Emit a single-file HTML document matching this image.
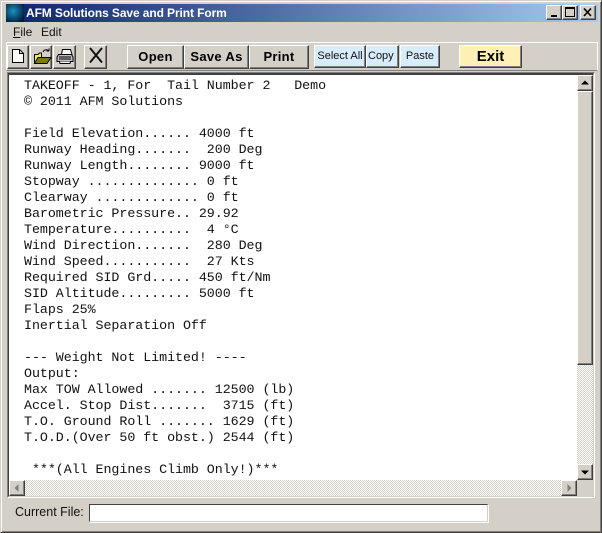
<!DOCTYPE html>
<html><head><meta charset="utf-8">
<style>
html,body{margin:0;padding:0;}
body{width:602px;height:533px;overflow:hidden;background:#d4d0c8;position:relative;font-family:"Liberation Sans",sans-serif;}
.a{position:absolute;box-sizing:border-box;}
.btn{position:absolute;box-sizing:border-box;background:#d4d0c8;border:1px solid;border-color:#fff #404040 #404040 #fff;box-shadow:inset -1px -1px 0 #808080;text-align:center;color:#000;white-space:nowrap;}
.tb{top:45px;height:24px;}
.big{top:45px;height:24px;font-weight:bold;font-size:13px;line-height:21px;letter-spacing:.3px;}
.blue{top:45px;height:23px;background:#d8edfc;font-size:11px;line-height:21px;color:#111;}
pre{position:absolute;margin:0;left:24px;top:79px;font:13.33px/16px "Liberation Mono",monospace;letter-spacing:-.05px;color:#111;}
.chk{background-color:#eee;background-image:conic-gradient(#d4d0c8 25%,#fff 0 50%,#d4d0c8 0 75%,#fff 0);background-size:2px 2px;}
</style></head><body>
<div class="a" style="left:0;top:0;width:602px;height:533px;border:1px solid;border-color:#d4d0c8 #404040 #404040 #d4d0c8;box-shadow:inset 1px 1px 0 #fff,inset -1px -1px 0 #808080;"></div>

<div class="a" style="left:6px;top:4px;width:592px;height:18px;background:linear-gradient(90deg,#0a246a,#a6caf0);"></div>
<svg class="a" style="left:6px;top:4px" width="18" height="18"><defs><radialGradient id="g" cx=".4" cy=".4" r=".7"><stop offset="0" stop-color="#1a8fc0"/><stop offset="1" stop-color="#021a33"/></radialGradient></defs><rect width="18" height="18" fill="url(#g)"/></svg>
<div class="a" style="left:26px;top:4px;height:18px;font-size:12px;line-height:18px;font-weight:bold;color:#fff;white-space:nowrap;letter-spacing:-.1px;">AFM Solutions Save and Print Form</div>
<div class="btn" style="left:546px;top:5px;width:16px;height:15px;"><div class="a" style="left:4px;top:9px;width:6px;height:2px;background:#000"></div></div>
<div class="btn" style="left:562px;top:5px;width:16px;height:15px;"><div class="a" style="left:2px;top:1px;width:10px;height:10px;border:1px solid #000;border-top-width:2px"></div></div>
<div class="btn" style="left:580px;top:5px;width:16px;height:15px;"><svg class="a" style="left:2px;top:2px" width="10" height="9"><path d="M1 0.5L8 8M8 0.5L1 8" stroke="#000" stroke-width="1.6" fill="none"/></svg></div>

<div class="a" style="left:13px;top:24px;font-size:12px;line-height:16px;color:#111;"><u>F</u>ile</div>
<div class="a" style="left:41px;top:24px;font-size:12px;line-height:16px;color:#111;">Edit</div>

<div class="a" style="left:6px;top:42px;width:592px;height:29px;border:1px solid;border-color:#fff #fff #808080 #fff;"></div>

<div class="btn tb" style="left:7px;width:22px;"><svg class="a" style="left:4px;top:3px" width="13" height="15"><path d="M.5 .5H7.5L11.5 4.5V13.5H.5Z" fill="#fff" stroke="#000"/><path d="M7.5 .5V4.5H11.5" fill="none" stroke="#000"/></svg></div>
<div class="btn tb" style="left:30px;width:22px;"><svg class="a" style="left:2px;top:2px" width="19" height="18"><path d="M1.5 6.5H5L6.5 5H8.5V15.5H1.5Z" fill="#f0e868" stroke="#000"/><path d="M1.5 15.5L5 9.5H18L14 15.5Z" fill="#7d7a10" stroke="#000"/><path d="M10 4C11 1.5 14 1 16 3M16 3V.5M16 3H13.5" fill="none" stroke="#000"/></svg></div>
<div class="btn tb" style="left:53px;width:23px;"><svg class="a" style="left:2px;top:2px" width="18" height="17"><path d="M6.5 1.5H14.5L16 6.5H5.5Z" fill="#fff" stroke="#000"/><path d="M2.5 6.5H15.5L17 9V13.5H1V9Z" fill="#c0c0c0" stroke="#000"/><path d="M3.5 13.5L4 15.5H14L14.5 13.5" fill="#fff" stroke="#000"/><path d="M3 9H15M3 11H15" stroke="#000"/></svg></div>
<div class="btn tb" style="left:84px;width:23px;"><svg class="a" style="left:3px;top:0" width="16" height="18"><path d="M2 2L14 16.5M14 2L2 16.5" stroke="#111" stroke-width="2" fill="none"/></svg></div>

<div class="btn big" style="left:127px;width:57px;">Open</div>
<div class="btn big" style="left:184px;width:65px;">Save As</div>
<div class="btn big" style="left:249px;width:60px;">Print</div>

<div class="btn blue" style="left:314px;width:52px;">Select All</div>
<div class="btn blue" style="left:366px;width:33px;text-align:left;padding-left:1px;">Copy</div>
<div class="btn blue" style="left:400px;width:40px;">Paste</div>
<div class="btn" style="left:459px;top:45px;width:63px;height:23px;background:#fff1b5;font-weight:bold;font-size:15px;line-height:21px;">Exit</div>

<div class="a" style="left:7px;top:72px;width:588px;height:426px;border:1px solid;border-color:#808080 #fff #fff #808080;"></div>
<div class="a" style="left:8px;top:73px;width:586px;height:424px;background:#fff;border:1px solid;border-color:#404040 #d4d0c8 #d4d0c8 #404040;border-width:2px 1px 1px 1px;"></div>

<pre>TAKEOFF - 1, For  Tail Number 2   Demo
© 2011 AFM Solutions

Field Elevation...... 4000 ft
Runway Heading.......  200 Deg
Runway Length........ 9000 ft
Stopway .............. 0 ft
Clearway ............. 0 ft
Barometric Pressure.. 29.92
Temperature..........  4 °C
Wind Direction.......  280 Deg
Wind Speed...........  27 Kts
Required SID Grd..... 450 ft/Nm
SID Altitude......... 5000 ft
Flaps 25%
Inertial Separation Off

--- Weight Not Limited! ----
Output:
Max TOW Allowed ....... 12500 (lb)
Accel. Stop Dist.......  3715 (ft)
T.O. Ground Roll ....... 1629 (ft)
T.O.D.(Over 50 ft obst.) 2544 (ft)

 ***(All Engines Climb Only!)***</pre>

<div class="a chk" style="left:577px;top:91px;width:16px;height:373px;"></div>
<div class="a chk" style="left:25px;top:480px;width:536px;height:16px;"></div>
<div class="btn" style="left:577px;top:75px;width:16px;height:16px;"><svg class="a" style="left:3px;top:4px" width="9" height="6"><path d="M4 0.5L8 4.5H0Z" fill="#000"/></svg></div>
<div class="btn" style="left:577px;top:91px;width:16px;height:274px;"></div>
<div class="btn" style="left:577px;top:464px;width:16px;height:16px;"><svg class="a" style="left:3px;top:5px" width="9" height="6"><path d="M0 .5H8L4 4.5Z" fill="#000"/></svg></div>
<div class="btn" style="left:9px;top:480px;width:16px;height:16px;"><svg class="a" style="left:4px;top:3px" width="6" height="9"><path d="M4.5 0V8L.5 4Z" fill="#808080"/></svg></div>
<div class="btn" style="left:561px;top:480px;width:16px;height:16px;"><svg class="a" style="left:5px;top:3px" width="6" height="9"><path d="M.5 0V8L4.5 4Z" fill="#808080"/></svg></div>
<div class="a" style="left:577px;top:480px;width:16px;height:16px;background:#d4d0c8"></div>

<div class="a" style="left:15px;top:504px;font-size:12.5px;line-height:16px;color:#111;white-space:nowrap;">Current File:</div>
<div class="a" style="left:89px;top:504px;width:399px;height:18px;background:#fff;border:1px solid;border-color:#404040 #d4d0c8 #d4d0c8 #404040;box-shadow:1px 1px 0 #fff;"></div>
</body></html>
